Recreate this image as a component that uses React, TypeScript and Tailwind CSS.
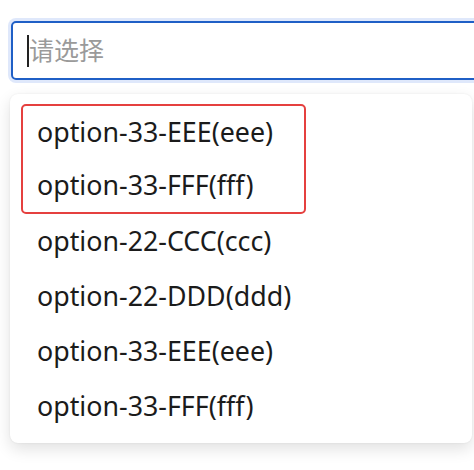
import React from "react";

const OPTIONS = [
  "option-33-EEE(eee)",
  "option-33-FFF(fff)",
  "option-22-CCC(ccc)",
  "option-22-DDD(ddd)",
  "option-33-EEE(eee)",
  "option-33-FFF(fff)",
];

export default function App() {
  return (
    <div
      className="h-[470px] w-[474px] overflow-hidden bg-white pl-[11px] pt-[21px]"
      style={{ fontFamily: '"Noto Sans", "Noto Sans CJK SC", sans-serif' }}
    >
      {/* select input */}
      <div className="flex h-[59px] w-[520px] items-center rounded-[5px] border-2 border-[#1f5fc6] pl-[14px] shadow-[0_0_0_3px_#dfe8fb]">
        <span className="h-[32px] w-[2px] bg-[#222]" />
        <span className="text-[25px] text-[#9a9a9a]">请选择</span>
      </div>

      {/* dropdown */}
      <div className="ml-[-1px] mt-[14px] w-[462px] rounded-[8px] bg-white pb-[9px] pt-[10px] shadow-[0_6px_16px_rgba(0,0,0,0.12),0_0_2px_rgba(0,0,0,0.08)]">
        <div className="ml-[11px] w-[285px] rounded-[5px] border-2 border-[#e5403f]">
          {OPTIONS.slice(0, 2).map((o, i) => (
            <div key={i} className="flex h-[53px] items-center pl-[14px] text-[26.8px] text-[#1b1b1b]">
              {o}
            </div>
          ))}
        </div>
        {OPTIONS.slice(2).map((o, i) => (
          <div key={i} className="flex h-[55px] items-center pl-[27px] text-[26.8px] text-[#1b1b1b]">
            {o}
          </div>
        ))}
      </div>
    </div>
  );
}
